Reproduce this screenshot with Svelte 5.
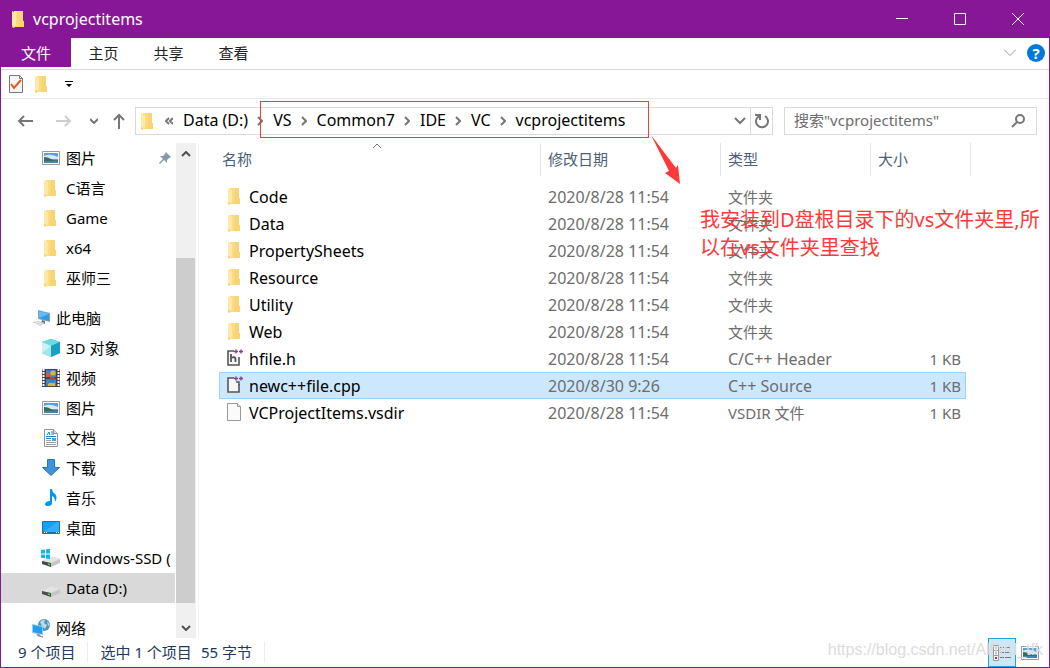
<script>
	const pinned = [
		{ name: '图片', icon: 'picture', pin: true },
		{ name: 'C语言', icon: 'folder' },
		{ name: 'Game', icon: 'folder' },
		{ name: 'x64', icon: 'folder' },
		{ name: '巫师三', icon: 'folder' }
	];
	const computer = [
		{ name: '此电脑', icon: 'pc', root: true },
		{ name: '3D 对象', icon: 'cube' },
		{ name: '视频', icon: 'video' },
		{ name: '图片', icon: 'picture' },
		{ name: '文档', icon: 'doc' },
		{ name: '下载', icon: 'download' },
		{ name: '音乐', icon: 'music' },
		{ name: '桌面', icon: 'desktop' },
		{ name: 'Windows-SSD (C:)', icon: 'windrive' },
		{ name: 'Data (D:)', icon: 'drive' }
	];
	const network = [{ name: '网络', icon: 'network', root: true }];
	const groups = [pinned, computer, network];

	const path = ['Data (D:)', 'VS', 'Common7', 'IDE', 'VC', 'vcprojectitems'];
	const tabs = ['主页', '共享', '查看'];

	const files = [
		{ name: 'Code', date: '2020/8/28 11:54', type: '文件夹', size: '', icon: 'folder' },
		{ name: 'Data', date: '2020/8/28 11:54', type: '文件夹', size: '', icon: 'folder' },
		{ name: 'PropertySheets', date: '2020/8/28 11:54', type: '文件夹', size: '', icon: 'folder' },
		{ name: 'Resource', date: '2020/8/28 11:54', type: '文件夹', size: '', icon: 'folder' },
		{ name: 'Utility', date: '2020/8/28 11:54', type: '文件夹', size: '', icon: 'folder' },
		{ name: 'Web', date: '2020/8/28 11:54', type: '文件夹', size: '', icon: 'folder' },
		{ name: 'hfile.h', date: '2020/8/28 11:54', type: 'C/C++ Header', size: '1 KB', icon: 'header' },
		{ name: 'newc++file.cpp', date: '2020/8/30 9:26', type: 'C++ Source', size: '1 KB', icon: 'source' },
		{ name: 'VCProjectItems.vsdir', date: '2020/8/28 11:54', type: 'VSDIR 文件', size: '1 KB', icon: 'file' }
	];

	let currentPlace = $state('Data (D:)');
	let selected = $state('newc++file.cpp');
	let search = $state('');

	// latin-only text is set one size larger than chinese text
	function isLatin(text) {
		return /^[\x20-\x7e]+$/.test(text);
	}
</script>

<svelte:head>
	<title>vcprojectitems</title>
</svelte:head>

{#snippet icon(name)}
	<svg class="icon" viewBox="0 0 18 18" aria-hidden="true">
		{#if name === 'folder'}
			<path d="M4 1h9v10h1v6H4z" fill="#fbdc82" />
			<path d="M9 1h4v10h1v6H8z" fill="#f8d474" />
			<path d="M2 1l4 2v11l-2 4-2-2z" fill="#ffe9a8" />
			<path d="M2 15l2 1v2l-2-1z" fill="#f2cf6c" />
		{:else if name === 'picture'}
			<path d="M.5 2.500h17v13H.5z" fill="#fff" stroke="#9a9a9a" />
			<path d="M2 4h14v10H2z" fill="#5b9fdc" />
			<path d="M2 7q5-3 14 1v2H2z" fill="#d5eafa" />
			<path d="M2 8q4 0 7 2t7 1v1H2z" fill="#356e61" />
			<path d="M2 12h14v2H2z" fill="#4386a8" />
		{:else if name === 'pc'}
			<path d="M6 1l12 3v9L6 10z" fill="#8ba1b0" />
			<path d="M7 2l10 3v7L7 9z" fill="#2d9cef" />
			<path d="M7 2l10 3-10 4z" fill="#65bcf8" />
			<path d="M10 11l3 1v3l-4-1z" fill="#69747b" />
			<path d="M0 13l6-1 7 2-5 3z" fill="#c9ced2" />
			<path d="M2 14l7 2M4 13l7 2M1 15l7-2" stroke="#eef0f2" stroke-width=".6" />
		{:else if name === 'cube'}
			<path d="M9 0l9 3v11l-9 4-9-4V3z" fill="#26b2cc" />
			<path d="M9 0l9 3-9 4-9-4z" fill="#6bd9e7" />
			<path d="M0 3l9 4v11l-9-4z" fill="#a5e5ee" />
			<path d="M0 3l9 4-9 7z" fill="#cbf2f6" />
			<path d="M9 7l9-4v11l-9 4z" fill="#16a2c0" />
		{:else if name === 'video'}
			<path d="M0 0h18v18H0z" fill="#444" />
			<path d="M1.500 0v18M16.500 0v18" stroke="#fff" stroke-width="2" stroke-dasharray="2 1" />
			<path d="M4 1h10v7H4zM4 10h10v7H4z" fill="#3d80ce" />
			<path d="M4 4h5v4H4z" fill="#da583a" />
			<circle cx="11" cy="4" r="2.600" fill="#d6ba27" />
			<path d="M8 8h5v3H8z" fill="#d93a24" />
			<path d="M6 15q2-2 4-1t3-1v4H6z" fill="#e0b638" />
		{:else if name === 'doc'}
			<path d="M2.500.5h9l4 4v13h-13z" fill="#fff" stroke="#929292" />
			<path d="M11.500.5v4h4" fill="#ddd" stroke="#929292" />
			<path d="M5 6l2-3 1 3M9 3h2M9 5h3M4 7.500h10M4 9.500h5" stroke="#1485d1" fill="none" />
			<path d="M10 9h4v3h-4z" fill="#4ba2ce" />
			<path d="M4 11.500h5M4 13.500h10M4 15.500h10" stroke="#9aa2a8" />
		{:else if name === 'download'}
			<path d="M5.500.5h7v8h5L9 16.500.5 8.500h5z" fill="#3d93dd" stroke="#2775bd" />
		{:else if name === 'music'}
			<path d="M8 0h2q0 3 3 5 3 3 0 8 0-5-3-6v7q0 3-4 3-3 0-3-2 1-3 5-3z" fill="#0096ef" />
		{:else if name === 'desktop'}
			<path d="M.5 2.500h17v12H.5z" fill="#16a0f5" stroke="#0874c5" />
			<path d="M2 13L15 3h2v10z" fill="#35aef9" />
			<path d="M1 13.500h16" stroke="#1172b5" />
			<path d="M2 13.500h1M4 13.500h1M14 13.500h1M16 13.500h1" stroke="#fff" />
		{:else if name === 'windrive' || name === 'drive'}
			<path d="M0 12l7-4h4l7 2v4l-9 4-9-3z" fill="#c4c6c8" />
			<path d="M0 12l7-4h4l7 2-9 4z" fill="#e2e3e4" />
			<path d="M0 12l9 2v4l-9-3z" fill="#494d4e" />
			<path d="M6 15l2 .5" stroke="#38ea40" stroke-width="1.500" />
			{#if name === 'windrive'}
				<path d="M-1 1l4-.5v4h-4zM4 .3L8 0v4.500H4zM-1 5.500h4v3.800l-4-.5zM4 5.500h4V10l-4-.5z" fill="#16b5e8" />
			{/if}
		{:else if name === 'network'}
			<circle cx="12" cy="6" r="6" fill="#4e93b7" />
			<path d="M8 3q3-3 5-2l-1 3 3 2-2 4-3-3zM15 2l3 4-2 1z" fill="#b9dceb" />
			<path d="M0 5l11 2v9L0 14z" fill="#8dcef5" />
			<path d="M1 6l9 2v7l-9-2z" fill="#249bec" />
			<path d="M5 15l3 1v1l3 1-5-1z" fill="#8b9aa5" stroke="#8b9aa5" />
		{:else if name === 'header' || name === 'source'}
			<path d="M8 2H2v14h11V8" fill="#f7f7f7" stroke="#555" stroke-width="1.600" />
			<path d="M8 2.500h4M10 .5v4M13 2.500h4M15 .5v4" stroke="#8a3e98" stroke-width="1.400" />
			{#if name === 'header'}
				<path d="M5 5v8M5 9q4-2 4.500 1v3" fill="none" stroke="#555" stroke-width="1.800" />
			{:else}
				<path d="M10 6h3v3" fill="none" stroke="#555" stroke-width="1.400" />
			{/if}
		{:else if name === 'file'}
			<path d="M1.500.5h10l3 3v14h-13z" fill="#fafafa" stroke="#999" />
			<path d="M11.500.5v3h3" fill="#e8e8e8" stroke="#999" />
		{/if}
	</svg>
{/snippet}

{#snippet chevron()}
	<svg class="chevron" viewBox="0 0 6 10" aria-hidden="true"><path d="M1 1l4 4-4 4" /></svg>
{/snippet}

<div class="window">
	<header class="titlebar">
		{@render icon('folder')}
		<h1>vcprojectitems</h1>
		<button aria-label="最小化"><svg viewBox="0 0 12 12"><path d="M0 5.500h12" /></svg></button>
		<button aria-label="最大化"><svg viewBox="0 0 12 12"><path d="M.5.5h11v11H.5z" /></svg></button>
		<button aria-label="关闭"><svg viewBox="0 0 12 12"><path d="M0 0l12 12M12 0L0 12" /></svg></button>
	</header>

	<nav class="tabs">
		<button class="file-tab">文件</button>
		{#each tabs as tab}
			<button>{tab}</button>
		{/each}
		<button class="expand" aria-label="展开功能区">
			<svg viewBox="0 0 12 7"><path d="M0 .5l6 6 6-6" /></svg>
		</button>
		<button class="help" aria-label="帮助"><span>?</span></button>
	</nav>

	<div class="quick">
		<button aria-label="属性">
			<svg class="icon" viewBox="0 0 18 18">
				<path d="M2.500.5h10l3 3v14h-13z" fill="#f6f6f6" stroke="#777" />
				<path d="M12.500.5v3h3" fill="none" stroke="#777" />
				<path d="M4 9l3 4 7-8" fill="none" stroke="#e8591c" stroke-width="2" />
			</svg>
		</button>
		<button aria-label="新建文件夹">{@render icon('folder')}</button>
		<button aria-label="自定义快速访问工具栏">
			<svg class="more" viewBox="0 0 8 6"><path d="M0 0h8v1H0zM1 3h6L4 6z" /></svg>
		</button>
	</div>

	<div class="location">
		<button class="nav" aria-label="后退"><svg viewBox="0 0 16 16"><path d="M16 8H2M7 3L2 8l5 5" /></svg></button>
		<button class="nav" aria-label="前进" disabled><svg viewBox="0 0 16 16"><path d="M0 8h14M9 3l5 5-5 5" /></svg></button>
		<button class="recent" aria-label="最近浏览的位置"><svg viewBox="0 0 8 6"><path d="M0 1l4 4 4-4" /></svg></button>
		<button class="up" aria-label="上移"><svg viewBox="0 0 16 16"><path d="M8 16V2M3 7l5-5 5 5" /></svg></button>
		<div class="address">
			{@render icon('folder')}
			<svg class="overflow" viewBox="0 0 8 8" aria-hidden="true"><path d="M4 1L1 4l3 3M8 1L5 4l3 3" /></svg>
			{#each path as part, i}
				{#if i > 0}{@render chevron()}{/if}
				<button class="crumb">{part}</button>
			{/each}
			<button class="history" aria-label="上一个位置"><svg viewBox="0 0 12 8"><path d="M1 1l5 5 5-5" /></svg></button>
			<button class="refresh" aria-label="刷新">
				<svg viewBox="0 0 16 16"><path d="M11 3a6 6 0 1 1-6 0M1 2h5v5" /></svg>
			</button>
		</div>
		<label class="search">
			<input type="text" aria-label="搜索" placeholder={'搜索"vcprojectitems"'} bind:value={search} />
			<svg viewBox="0 0 14 14" aria-hidden="true"><circle cx="9" cy="5" r="4" /><path d="M6 8l-5 5" /></svg>
		</label>
	</div>

	<main>
		<aside>
			<div class="tree">
				{#each groups as group}
					<ul>
						{#each group as place}
							<li>
								<button
									class="place"
									class:root={place.root}
									class:current={place.name === currentPlace}
									onclick={() => (currentPlace = place.name)}
								>
									{@render icon(place.icon)}
									<span>{place.name}</span>
									{#if place.pin}
										<svg class="pin" viewBox="0 0 12 12" aria-hidden="true">
											<path d="M7 0l5 5-2 1-2 2v3L5 8l-4 4-1-1 4-4-3-3h3l2-2z" />
										</svg>
									{/if}
								</button>
							</li>
						{/each}
					</ul>
				{/each}
			</div>
			<div class="scrollbar">
				<button aria-label="向上滚动"><svg viewBox="0 0 10 6"><path d="M1 5l4-4 4 4" /></svg></button>
				<div class="thumb"></div>
				<button aria-label="向下滚动"><svg viewBox="0 0 10 6"><path d="M1 1l4 4 4-4" /></svg></button>
			</div>
		</aside>

		<section>
			<table>
				<colgroup>
					<col class="col-name" />
					<col class="col-date" />
					<col class="col-type" />
					<col class="col-size" />
					<col class="col-end" />
				</colgroup>
				<thead>
					<tr>
						<th aria-sort="ascending">
							名称
							<svg class="sort" viewBox="0 0 10 6" aria-hidden="true"><path d="M1 5l4-4 4 4" /></svg>
						</th>
						<th>修改日期</th>
						<th>类型</th>
						<th colspan="2">大小</th>
					</tr>
				</thead>
				<tbody>
					{#each files as file}
						<tr class:selected={file.name === selected} onclick={() => (selected = file.name)}>
							<td class="latin"><div class="name">{@render icon(file.icon)}{file.name}</div></td>
							<td class="latin">{file.date}</td>
							<td class:latin={isLatin(file.type)}>{file.type}</td>
							<td class="size">{file.size}</td>
						</tr>
					{/each}
				</tbody>
			</table>
		</section>
	</main>

	<footer>
		<span class="count">9 个项目</span>
		<span class="chosen">选中 1 个项目</span>
		<span class="bytes">55 字节</span>
		<button class="view active" aria-label="详细信息">
			<svg viewBox="0 0 18 18">
				<path d="M.5 1.500h5v5h-5zM.5 6.500h5v5h-5zM.5 11.500h5v5h-5z" fill="#fff" stroke="#999" />
				<path d="M2 3h2v2H2zM2 8h2v2H2z" fill="#3b78a8" />
				<path d="M2 13h2v2H2z" fill="#c32b20" />
				<path d="M7 3.500h4M12 3.500h6M7 8.500h4M12 8.500h6M7 13.500h4M12 13.500h6" stroke="#777" />
			</svg>
		</button>
		<button class="view" aria-label="大缩略图">{@render icon('picture')}</button>
	</footer>

	<div class="frame"></div>
	<svg class="arrow" viewBox="0 0 30 50" aria-hidden="true">
		<path d="M0 0l25 33 2-3 2 19-15-11 4-2z" />
	</svg>
	<p class="note">我安装到D盘根目录下的vs文件夹里,所以在vs文件夹里查找</p>
	<p class="watermark">https://blog.csdn.net/Alfred_tfk</p>
</div>

<style>
	:global(body) {
		margin: 0;
		background: #fff;
	}

	.window {
		position: relative;
		box-sizing: border-box;
		display: flex;
		flex-direction: column;
		height: 100vh;
		border: 1px solid #881798;
		border-top: 0;
		background: #fff;
		color: #000;
		font: 15px/20px "Noto Sans", "Noto Sans CJK SC", sans-serif;
		overflow: hidden;
	}

	button {
		display: flex;
		align-items: center;
		justify-content: center;
		padding: 0;
		border: 0;
		background: none;
		color: inherit;
		font: inherit;
	}

	svg {
		display: block;
		flex: none;
		fill: none;
	}

	.icon {
		width: 18px;
		height: 18px;
		overflow: visible;
	}

	.titlebar {
		display: flex;
		align-items: center;
		flex: none;
		height: 38px;
		padding: 0 2px 0 9px;
		background: #881798;
		color: #fff;
	}

	.titlebar h1 {
		flex: 1;
		margin: 0 0 0 5px;
		font-size: 16px;
		font-weight: 400;
	}

	.titlebar button {
		width: 58px;
		height: 38px;
	}

	.titlebar button svg {
		width: 12px;
		height: 12px;
		stroke: #fff;
	}

	.tabs {
		display: flex;
		flex: none;
		height: 31px;
		border-bottom: 1px solid #dadada;
		color: #222;
	}

	.tabs button {
		width: 65px;
		height: 29px;
	}

	.tabs .file-tab {
		width: 70px;
		background: #881798;
		color: #fff;
	}

	.tabs .expand {
		width: 26px;
		margin-left: auto;
	}

	.expand svg {
		width: 12px;
		height: 7px;
		stroke: #999;
	}

	.tabs .help {
		width: 26px;
	}

	.help span {
		width: 18px;
		height: 18px;
		border-radius: 50%;
		background: #0078d7;
		color: #fff;
		font-weight: 700;
		line-height: 18px;
	}

	.quick {
		display: flex;
		align-items: center;
		gap: 8px;
		flex: none;
		height: 28px;
		padding-left: 6px;
		border-bottom: 1px solid #e8e8e8;
	}

	.more {
		width: 8px;
		height: 6px;
		margin-left: 6px;
		fill: #000;
	}

	.location {
		display: flex;
		align-items: center;
		flex: none;
		height: 44px;
		padding-right: 12px;
	}

	.location svg:not(.icon) {
		stroke: #767676;
		stroke-width: 2;
	}

	.nav {
		width: 39px;
		padding-left: 8px;
	}

	.nav svg,
	.up svg {
		width: 16px;
		height: 16px;
	}

	.nav:disabled {
		opacity: 0.35;
	}

	.recent {
		width: 30px;
	}

	.recent svg {
		width: 8px;
		height: 6px;
	}

	.up {
		width: 20px;
		margin-right: 6px;
	}

	.address {
		box-sizing: border-box;
		display: flex;
		align-items: center;
		flex: 1;
		height: 28px;
		margin-right: 11px;
		padding-left: 3px;
		border: 1px solid #d9d9d9;
	}

	.location .overflow {
		width: 8px;
		height: 8px;
		margin: 0 3px 0 8px;
		stroke-width: 1;
	}

	.crumb {
		padding: 0 7px 3px;
		font-size: 16px;
	}

	.location .chevron {
		width: 6px;
		height: 10px;
		margin: 0 3px 0 2px;
	}

	.history {
		width: 20px;
		height: 26px;
		margin-left: auto;
	}

	.history svg {
		width: 12px;
		height: 8px;
	}

	.refresh {
		width: 22px;
		height: 26px;
		border-left: 1px solid #d9d9d9;
	}

	.refresh svg {
		width: 16px;
		height: 16px;
	}

	.search {
		box-sizing: border-box;
		display: flex;
		align-items: center;
		width: 253px;
		height: 28px;
		padding: 0 11px 0 9px;
		border: 1px solid #d9d9d9;
	}

	.search input {
		flex: 1;
		min-width: 0;
		padding: 0 0 2px;
		border: 0;
		outline: 0;
		background: none;
		font: inherit;
	}

	.search input::placeholder {
		color: #6d6d6d;
		opacity: 1;
	}

	.search svg {
		width: 14px;
		height: 14px;
	}

	main {
		display: flex;
		flex: 1;
		min-height: 0;
	}

	aside {
		display: flex;
		flex: none;
		width: 197px;
		border-right: 1px solid #f3f3f3;
	}

	.tree {
		width: 174px;
		overflow: hidden;
	}

	.tree ul {
		margin: 0 0 10px;
		padding: 0;
		list-style: none;
	}

	.place {
		justify-content: flex-start;
		gap: 6px;
		width: 100%;
		height: 30px;
		padding: 0 4px 0 41px;
		white-space: nowrap;
	}

	.place span {
		overflow: hidden;
	}

	.place.root {
		padding-left: 31px;
	}

	.place.current {
		background: #d9d9d9;
	}

	.pin {
		width: 12px;
		height: 12px;
		margin-left: auto;
		fill: #8a98a5;
	}

	.scrollbar {
		display: flex;
		flex-direction: column;
		width: 20px;
		margin-left: 1px;
		background: #f0f0f0;
	}

	.scrollbar button {
		flex: none;
		height: 21px;
	}

	.scrollbar svg {
		width: 10px;
		height: 6px;
		stroke: #505050;
		stroke-width: 2;
	}

	.thumb {
		flex: 1;
		width: 19px;
		margin: 94px 0 14px;
		background: #cdcdcd;
	}

	section {
		flex: 1;
		min-width: 0;
		padding-left: 20px;
	}

	table {
		width: 752px;
		table-layout: fixed;
		border-spacing: 0;
	}

	.col-name {
		width: 322px;
	}

	.col-date {
		width: 180px;
	}

	.col-type {
		width: 150px;
	}

	.col-size {
		width: 95px;
	}

	.col-end {
		width: 5px;
	}

	th {
		position: relative;
		height: 31px;
		padding: 0 7px 2px;
		border-right: 1px solid #e5e5e5;
		color: #4c607a;
		font-weight: 400;
		text-align: left;
	}

	th:first-child {
		padding-left: 3px;
	}

	.sort {
		position: absolute;
		top: 0;
		left: 153px;
		width: 10px;
		height: 6px;
		stroke: #777;
	}

	tbody::before {
		content: "";
		display: block;
		height: 7px;
	}

	td {
		height: 27px;
		padding: 0 7px;
		color: #6d6d6d;
		white-space: nowrap;
	}

	td:first-child {
		color: #000;
	}

	.latin {
		font-size: 16px;
	}

	.name {
		display: flex;
		align-items: center;
		gap: 5px;
	}

	.name .icon {
		margin-bottom: 2px;
	}

	.size {
		padding-right: 5px;
		text-align: right;
	}

	.selected td {
		background: #cce8ff;
		box-shadow: inset 0 1px #99d1ff, inset 0 -1px #99d1ff;
	}

	.selected td:first-child {
		box-shadow: inset 0 1px #99d1ff, inset 0 -1px #99d1ff, inset 1px 0 #99d1ff;
	}

	.selected td:last-child {
		box-shadow: inset 0 1px #99d1ff, inset 0 -1px #99d1ff, inset -1px 0 #99d1ff;
	}

	footer {
		display: flex;
		align-items: center;
		flex: none;
		height: 29px;
		padding: 0 5px 0 17px;
		color: #1e395b;
	}

	footer span {
		margin-bottom: 2px;
	}

	.chosen {
		margin-left: 12px;
		padding-left: 12px;
		border-left: 1px solid #eee;
	}

	.bytes {
		margin-left: 9px;
		margin-right: auto;
		padding-right: 12px;
		border-right: 1px solid #eee;
	}

	.view {
		box-sizing: border-box;
		width: 28px;
		height: 29px;
	}

	.view svg {
		width: 18px;
		height: 18px;
	}

	.view.active {
		border: 1px solid #26a0da;
		background: #cce8f6;
	}

	/* red marks drawn over the window */
	.frame {
		position: absolute;
		top: 101px;
		left: 259px;
		box-sizing: border-box;
		width: 389px;
		height: 37px;
		border: 1px solid #fd3a3a;
		pointer-events: none;
	}

	.arrow {
		position: absolute;
		top: 135px;
		left: 650px;
		width: 30px;
		height: 50px;
		fill: #fd3a3a;
	}

	.note {
		position: absolute;
		top: 206px;
		left: 699px;
		width: 346px;
		margin: 0;
		color: #fd3a3a;
		font-size: 20px;
		line-height: 28px;
		pointer-events: none;
	}

	.watermark {
		position: absolute;
		right: 6px;
		bottom: 7px;
		margin: 0;
		color: #dcdcdc;
		font: 16px/20px "Liberation Sans", Arial, sans-serif;
		pointer-events: none;
	}
</style>
